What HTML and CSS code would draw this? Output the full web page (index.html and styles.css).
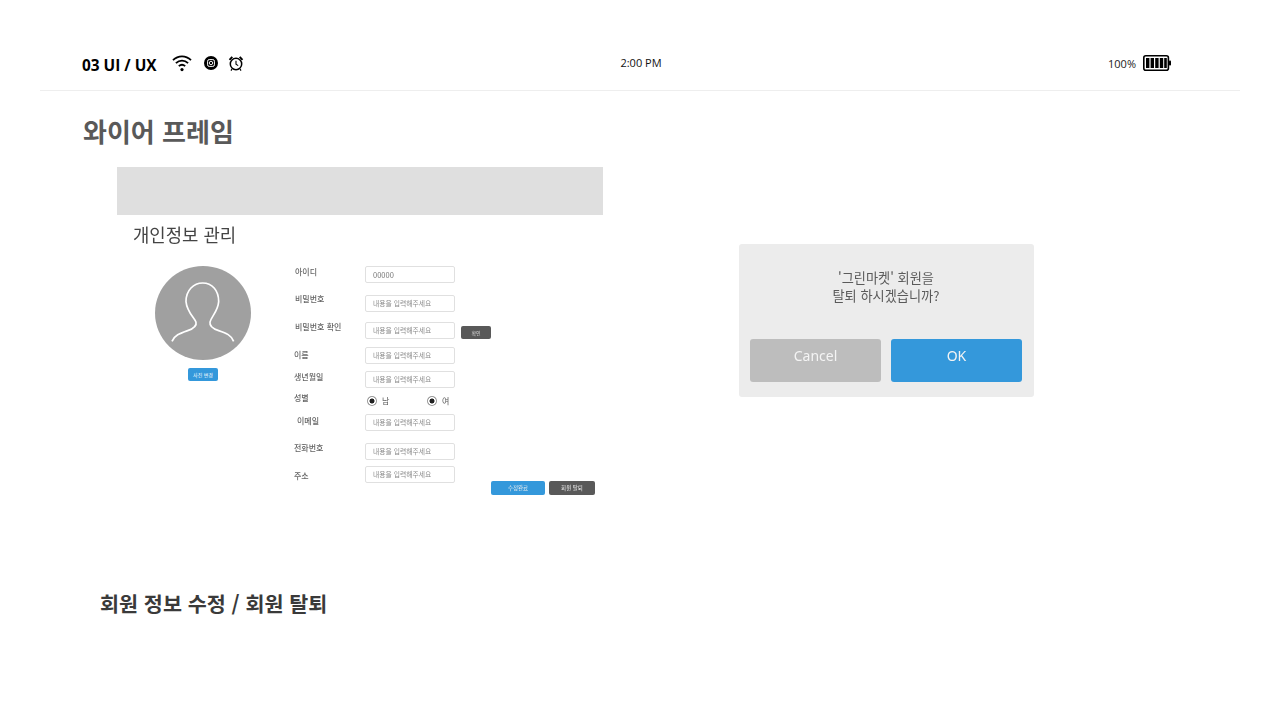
FILE: index.html
```html
<!DOCTYPE html>
<html lang="ko">
<head>
<meta charset="utf-8">
<title>03 UI / UX</title>
<link rel="stylesheet" href="styles.css">
</head>
<body>
<div class="slide">
  <header class="status">
    <div class="status-left">
      <span class="section">03 UI / UX</span>
      <svg class="ico wifi" viewBox="0 0 20 18" aria-hidden="true"><path d="M1 6.2C6.2 1.2 13.8 1.2 19 6.2M3.9 9.2C7.5 5.8 12.5 5.8 16.1 9.2M6.8 12.2C8.7 10.5 11.3 10.5 13.2 12.2" fill="none" stroke="#000" stroke-width="1.8"/><circle cx="10" cy="15.6" r="1.6" fill="#000"/></svg>
      <svg class="ico insta" viewBox="0 0 14 14" aria-hidden="true"><circle cx="7" cy="7" r="7" fill="#000"/><rect x="3.6" y="3.6" width="6.8" height="6.8" rx="1.6" fill="none" stroke="#fff" stroke-width="1"/><circle cx="7" cy="7" r="1.7" fill="none" stroke="#fff" stroke-width=".9"/></svg>
      <svg class="ico clock" viewBox="0 0 16 16" aria-hidden="true"><circle cx="8" cy="9" r="5.7" fill="none" stroke="#000" stroke-width="1.5"/><path d="M8 5.8V9.3L10.2 10.6" fill="none" stroke="#000" stroke-width="1.1"/><path d="M.8 4.2 3.6 1.2 5 2.6 2.2 5.4ZM15.2 4.2 12.4 1.2 11 2.6 13.8 5.4Z" fill="#000"/><path d="M4 14 3 15.6M12 14 13 15.6" stroke="#000" stroke-width="1.2"/></svg>
    </div>
    <span class="time">2:00 PM</span>
    <div class="status-right">
      <span class="pct">100%</span>
      <svg class="ico battery" viewBox="0 0 28 16" aria-hidden="true"><rect x=".8" y=".8" width="24.6" height="14.4" rx="2" fill="#fff" stroke="#000" stroke-width="1.6"/><path d="M3 3h3.4v10H3zM7.6 3H11v10H7.6zM12.2 3h3.4v10h-3.4zM16.8 3h3.4v10h-3.4zM21.2 3h2.6v10h-2.6z" fill="#000"/><rect x="26" y="5.5" width="2" height="5" rx=".8" fill="#000"/></svg>
    </div>
  </header>

  <h1 class="title">와이어 프레임</h1>

  <div class="stage">
    <section class="wire">
      <div class="wire-bar"></div>
      <h2 class="wire-title">개인정보 관리</h2>
      <div class="wire-body">
        <div class="profile">
          <svg class="avatar" viewBox="114 166 288 288" preserveAspectRatio="none" aria-hidden="true"><circle cx="258" cy="310" r="144" fill="#a0a0a0"/><path d="M165 397C172 378 190 372 212 364C232 357 240 350 237 338C233 325 210 308 207 275C207 240 230 218 257 218C285 218 305 240 305 275C303 305 282 322 279 338C277 350 287 358 305 364C328 372 343 378 350 397" fill="none" stroke="#fff" stroke-width="5"/></svg>
          <span class="photo-btn">사진 변경</span>
        </div>
        <div class="form">
          <div class="row r1"><span class="lbl">아이디</span><span class="field value">00000</span></div>
          <div class="row r2"><span class="lbl">비밀번호</span><span class="field">내용을 입력해주세요</span></div>
          <div class="row r3"><span class="lbl">비밀번호 확인</span><span class="field">내용을 입력해주세요</span><span class="check-btn">확인</span></div>
          <div class="row r4"><span class="lbl">이름</span><span class="field">내용을 입력해주세요</span></div>
          <div class="row r5"><span class="lbl">생년월일</span><span class="field">내용을 입력해주세요</span></div>
          <div class="row r6"><span class="lbl">성별</span>
            <div class="radios">
              <span class="radio"><i class="dot"></i>남</span>
              <span class="radio"><i class="dot"></i>여</span>
            </div>
          </div>
          <div class="row r7"><span class="lbl">이메일</span><span class="field">내용을 입력해주세요</span></div>
          <div class="row r8"><span class="lbl">전화번호</span><span class="field">내용을 입력해주세요</span></div>
          <div class="row r9"><span class="lbl">주소</span><span class="field">내용을 입력해주세요</span></div>
          <div class="actions"><span class="act blue">수정완료</span><span class="act dark">회원 탈퇴</span></div>
        </div>
      </div>
    </section>

    <section class="dialog">
      <p class="msg">'그린마켓' 회원을<br>탈퇴 하시겠습니까?</p>
      <div class="dialog-btns">
        <span class="dbtn cancel">Cancel</span>
        <span class="dbtn ok">OK</span>
      </div>
    </section>
  </div>

  <p class="caption">회원 정보 수정 / 회원 탈퇴</p>
</div>
</body>
</html>
```
FILE: styles.css
```css
* { box-sizing: border-box; }
html, body { margin: 0; padding: 0; background: #fff; }
body { font-family: "Open Sans", "Noto Sans CJK KR", sans-serif; overflow: hidden; }
.slide { width: 1280px; height: 720px; display: flex; flex-direction: column; }

.status { margin: 0 40px; height: 91px; border-bottom: 1px solid #eeeeee; padding: 52px 42px 0; display: grid; grid-template-columns: 1fr 1fr 1fr; align-items: start; }
.status-left { display: flex; align-items: center; height: 24px; }
.section { align-self: flex-start; font-size: 15.4px; font-weight: 700; color: #000; line-height: 24px; width: 90px; margin-top: 2px; flex: none; }
.ico { display: block; flex: none; }
.wifi { width: 20px; height: 18px; margin-right: 12px; margin-top: -3px; }
.insta { width: 14px; height: 14px; margin-right: 10px; margin-top: -2px; }
.clock { width: 16px; height: 16px; margin-top: -3px; }
.time { font-size: 11px; line-height: 22px; color: #111; text-align: center; padding-left: 2px; }
.status-right { display: flex; justify-content: flex-end; align-items: center; height: 22px; gap: 7px; padding-right: 27px; }
.pct { font-size: 11px; color: #222; }
.battery { width: 28px; height: 16px; }

.title { margin: 25px 0 0 83px; font-size: 26px; line-height: 30px; font-weight: 700; color: #595959; font-family: "Noto Sans CJK KR", sans-serif; height: 51px; }

.stage { display: flex; align-items: flex-start; padding-left: 117px; height: 424px; }
.wire { width: 486px; height: 335px; flex: none; filter: blur(.7px); color: #555; font-family: "Noto Sans CJK KR", sans-serif; }
.wire-bar { height: 48px; background: #dfdfdf; }
.wire-title { margin: 8px 0 0 16px; font-size: 17.8px; line-height: 22px; font-weight: 400; color: #444; }
.wire-body { display: flex; margin-top: 21px; }
.profile { width: 172px; padding-left: 38px; display: flex; flex-direction: column; align-items: flex-start; }
.avatar { width: 96px; height: 94px; display: block; }
.photo-btn { margin: 8px 0 0 33px; width: 30px; height: 13px; background: #3498db; color: #fff; font-size: 5px; line-height: 13px; text-align: center; border-radius: 2px; }

.form { position: relative; width: 314px; font-size: 8px; }
.row { display: flex; align-items: flex-start; }
.r1 { height: 29px; } .r2 { height: 27px; } .r3 { height: 25px; } .r4 { height: 24px; }
.r5 { height: 22px; } .r6 { height: 21px; } .r7 { height: 29px; } .r8 { height: 23px; } .r9 { height: 16px; }
.lbl { width: 76px; padding-left: 6px; font-size: 8px; line-height: 12px; color: #666; flex: none; font-weight: 500; }
.r1 .lbl { margin-top: 0; }
.r2 .lbl { margin-top: -2px; }
.r3 .lbl { margin-top: -1px; }
.r4 .lbl { margin-top: 2px; padding-left: 5px; }
.r5 .lbl { margin-top: 0; padding-left: 5px; }
.r6 .lbl { margin-top: -1px; padding-left: 5px; }
.r7 .lbl { margin-top: 1px; padding-left: 8px; }
.r8 .lbl { margin-top: -1px; padding-left: 5px; }
.r9 .lbl { margin-top: 4px; padding-left: 5px; }
.field { width: 90px; height: 17px; border: 1px solid #e0e0e0; border-radius: 2px; background: #fff; padding-left: 7px; font-size: 6.8px; line-height: 15px; color: #8a8a8a; flex: none; }
.value { font-size: 7.5px; color: #777; }
.check-btn { margin: 4px 0 0 6px; width: 30px; height: 13px; background: #595959; color: #ddd; font-size: 5px; line-height: 13px; text-align: center; border-radius: 2px; }
.radios { display: flex; width: 88px; padding-left: 2px; justify-content: space-between; }
.radio { display: flex; align-items: center; gap: 5px; font-size: 8px; line-height: 14px; color: #555; width: 30px; margin-top: 1px; }
.dot { width: 10px; height: 10px; border-radius: 50%; background: radial-gradient(circle, #222 0 2.2px, #fff 2.8px 3.6px, #999 4.2px); flex: none; }
.radio + .radio { width: 26px; }
.actions { position: absolute; left: 202px; top: 215px; display: flex; gap: 4px; }
.act { height: 14px; border-radius: 2px; color: #eee; font-size: 5.5px; line-height: 14px; text-align: center; }
.blue { width: 54px; background: #3498db; }
.dark { width: 46px; background: #595959; }

.dialog { margin: 77px 0 0 136px; width: 295px; height: 153px; background: #ececec; border-radius: 3px; padding: 25px 12px 0 11px; filter: blur(.4px); font-family: "Noto Sans CJK KR", sans-serif; }
.msg { margin: 0; height: 70px; text-align: center; font-size: 13.2px; line-height: 18px; color: #5a5a5a; }
.dialog-btns { display: flex; justify-content: space-between; }
.dbtn { width: 131px; height: 43px; border-radius: 3px; font-family: "Noto Sans", sans-serif; font-size: 14px; line-height: 33px; text-align: center; color: #f4f4f4; }
.cancel { background: #bdbdbd; }
.ok { background: #3498db; }

.caption { margin: 0 0 0 100px; font-size: 20.7px; line-height: 24px; font-weight: 700; color: #3a3a3a; font-family: "Noto Sans CJK KR", sans-serif; }
```
